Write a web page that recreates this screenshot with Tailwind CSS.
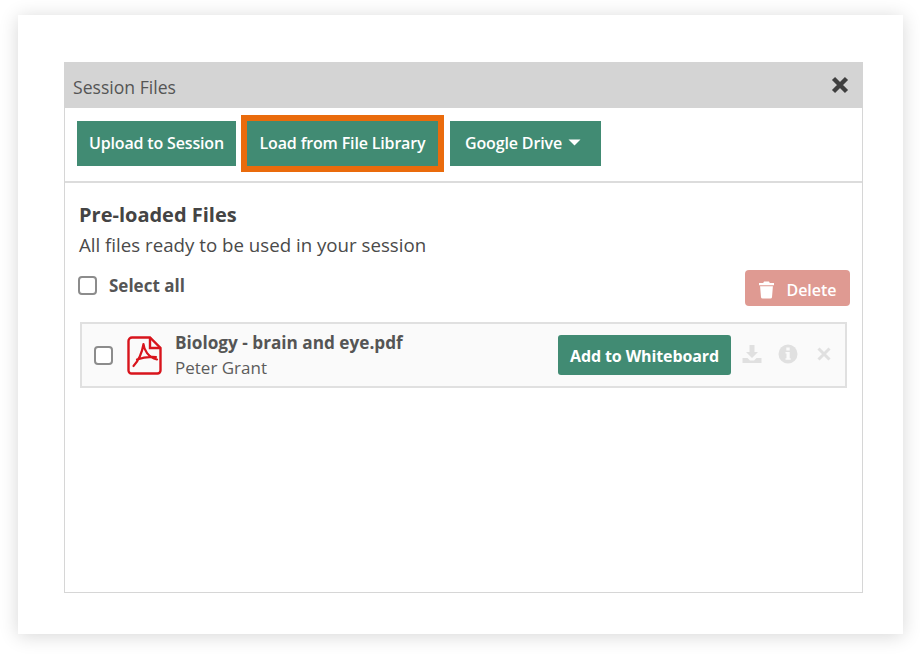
<!DOCTYPE html>
<html lang="en">
<head>
    <meta charset="UTF-8">
    <title>Session Files</title>
    <script src="https://cdn.jsdelivr.net/npm/@tailwindcss/browser@4"></script>
</head>
<body class="bg-white h-[655px] overflow-hidden font-['Open_Sans',sans-serif] text-[#4a4a4a]">
    <div class="ml-[18px] mt-[15px] w-[885px] h-[619px] pt-[47px] pl-[46px] bg-white shadow-[0_2px_18px_rgba(0,0,0,0.16)]">
        <div class="w-[799px] h-[531px] border border-t-0 border-[#d6d6d6] flex flex-col">
            <div class="-mx-px h-[46px] bg-[#d4d4d4] flex items-center justify-between pl-[9px] pr-[13px]">
                <span class="pt-[4px] text-[17.6px] text-[#555555]">Session Files</span>
                <svg class="w-[20px] h-[20px]" viewBox="0 0 20 20"><path d="M3.5 3.5L16.5 16.5M16.5 3.5L3.5 16.5" stroke="#404040" stroke-width="4.4" fill="none"/></svg>
            </div>
            <div class="h-[75px] border-b-2 border-[#dcdcdc] flex items-start pt-[7px] pl-[12px]">
                <button class="mt-[6px] w-[159px] h-[45px] pb-[2px] bg-[#418b73] text-white text-[16px] font-semibold tracking-[-0.16px]">Upload to Session</button>
                <div class="ml-[5px] border-[6px] border-[#ea6b0c]">
                    <button class="block w-[191px] h-[45px] pb-[2px] bg-[#418b73] text-white text-[16px] font-semibold tracking-[-0.16px]">Load from File Library</button>
                </div>
                <button class="mt-[6px] ml-[6px] w-[151px] h-[45px] pb-[2px] pr-[5px] bg-[#418b73] text-white text-[16px] font-semibold tracking-[-0.15px] flex items-center justify-center gap-[6px]">
                    Google Drive
                    <svg class="w-[13px] h-[7px]" viewBox="0 0 13 7"><path d="M0.5 0.5H12.5L6.5 6.5Z" fill="white"/></svg>
                </button>
            </div>
            <div class="flex-1 pl-[14px] pr-[12px] pt-[19px]">
                <h2 class="text-[20px] leading-[25px] font-bold text-[#444444]">Pre-loaded Files</h2>
                <p class="mt-[6px] text-[18.7px] leading-[24px] text-[#4a4a4a]">All files ready to be used in your session</p>
                <div class="flex items-start justify-between">
                    <label class="-ml-[1px] mt-[16px] flex items-center gap-[12px] text-[17px] leading-[22px] font-bold text-[#555555]">
                        <span class="w-[19px] h-[19px] rounded-[4px] border-2 border-[#8c8c8c] bg-white"></span>
                        <span class="pt-[2px]">Select all</span>
                    </label>
                    <button class="mt-[13px] w-[105px] h-[36px] pt-[3px] rounded-[4px] bg-[#df9a92] text-white text-[16px] font-semibold flex items-center justify-center gap-[11px]">
                        <svg class="w-[17px] h-[19px]" viewBox="0 0 16 19"><path d="M5.5 1.5h5l.8 1.5H15.5v2.2H.5V3h4.2zM1.6 6.2h12.8l-.9 11a1.6 1.6 0 0 1-1.6 1.4H4.1a1.6 1.6 0 0 1-1.6-1.4z" fill="white"/></svg>
                        Delete
                    </button>
                </div>
                <div class="mt-[16px] ml-[1px] w-[767px] h-[66px] border-2 border-[#e0e0e0] bg-[#fafafa] flex items-center pl-[12px] pr-[14px]">
                    <span class="w-[19px] h-[19px] rounded-[4px] border-2 border-[#8c8c8c] bg-white shrink-0"></span>
                    <svg class="ml-[14px] w-[35px] h-[39px] shrink-0" viewBox="0 0 35 39" fill="none" stroke="#d8141c">
                        <path d="M5 1.5H23L33.5 12V34.5A3 3 0 0 1 30.5 37.5H4.5A3 3 0 0 1 1.5 34.5V5A3.5 3.5 0 0 1 5 1.5Z" stroke-width="2.4"/>
                        <path d="M23 1.5V12H33.5" stroke-width="2.4"/>
                        <path d="M16.5 8C15.5 14 12 24 6.5 30M16.5 8C17 14 21 21 30 23.5M10 23.5C15 21.5 21 20.5 29 21" stroke-width="2.2" stroke-linecap="round"/>
                    </svg>
                    <div class="ml-[13px] flex-1 mt-[1px]">
                        <div class="text-[17.2px] leading-[24px] font-bold text-[#555555]">Biology - brain and eye.pdf</div>
                        <div class="text-[17px] leading-[26px] text-[#5c5c5c]">Peter Grant</div>
                    </div>
                    <button class="w-[173px] h-[40px] pt-[2px] rounded-[3px] bg-[#418b73] text-white text-[16px] font-bold tracking-[-0.1px]">Add to Whiteboard</button>
                    <svg class="-mt-[2px] ml-[11px] w-[20px] h-[20px] shrink-0" viewBox="0 0 20 20" fill="#e0e0e0"><path d="M7.5 1h5v7H16l-6 6-6-6h3.5zM0.5 14h5l2.5 2.5h4l2.5-2.5h5v5h-19z"/></svg>
                    <svg class="-mt-[2px] ml-[16px] w-[20px] h-[20px] shrink-0" viewBox="0 0 20 20"><circle cx="10" cy="10" r="9.5" fill="#e0e0e0"/><rect x="8.3" y="3.5" width="3.4" height="3" fill="#fafafa"/><path d="M7.5 8h4.2v6.2h1v1.6H7.5v-1.6h1V9.6h-1z" fill="#fafafa"/></svg>
                    <svg class="-mt-[2px] ml-[19px] w-[14px] h-[14px] shrink-0" viewBox="0 0 14 14"><path d="M1.5 1.5L12.5 12.5M12.5 1.5L1.5 12.5" stroke="#e0e0e0" stroke-width="3" fill="none"/></svg>
                </div>
            </div>
        </div>
    </div>
</body>
</html>
